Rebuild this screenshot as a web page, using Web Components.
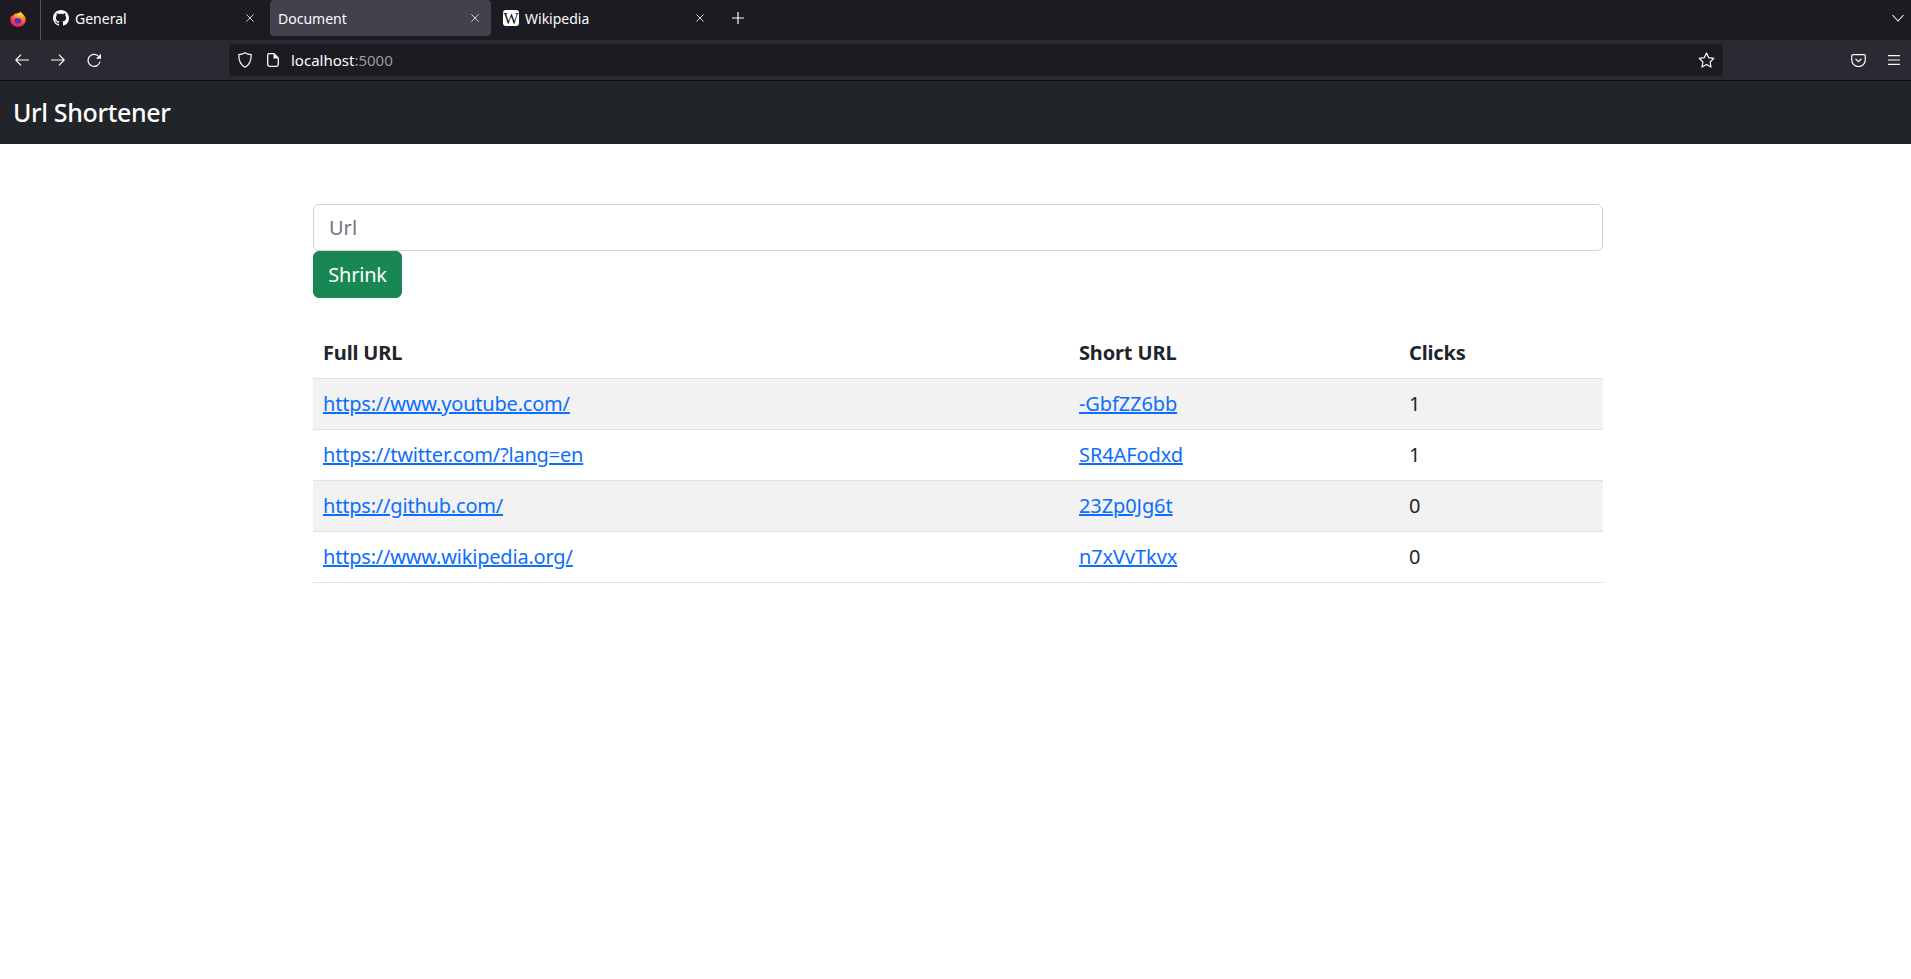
<!DOCTYPE html>
<html lang="en">
<head>
<meta charset="utf-8">
<title>Document</title>
<style>
  html, body { margin: 0; padding: 0; background: #fff; }
  body { font-family: "Noto Sans", "Open Sans", sans-serif; color: #212529; }
</style>
</head>
<body>
<browser-chrome>
  <browser-tab>
    <svg slot="icon" width="16" height="16" viewBox="0 0 16 16"><path fill="#fbfbfe" d="M8 0C3.58 0 0 3.58 0 8c0 3.54 2.29 6.53 5.47 7.59.4.07.55-.17.55-.38 0-.19-.01-.82-.01-1.49-2.01.37-2.53-.49-2.69-.94-.09-.23-.48-.94-.82-1.13-.28-.15-.68-.52-.01-.53.63-.01 1.08.58 1.23.82.72 1.21 1.87.87 2.33.66.07-.52.28-.87.51-1.07-1.78-.2-3.64-.89-3.64-3.95 0-.87.31-1.59.82-2.15-.08-.2-.36-1.02.08-2.12 0 0 .67-.21 2.2.82.64-.18 1.32-.27 2-.27.68 0 1.36.09 2 .27 1.53-1.04 2.2-.82 2.2-.82.44 1.1.16 1.92.08 2.12.51.56.82 1.27.82 2.15 0 3.07-1.87 3.75-3.65 3.95.29.25.54.73.54 1.48 0 1.07-.01 1.93-.01 2.2 0 .21.15.46.55.38A8.013 8.013 0 0016 8c0-4.42-3.58-8-8-8z"/></svg>
    General
  </browser-tab>
  <browser-tab selected>Document</browser-tab>
  <browser-tab>
    <span slot="icon" style="display:block;width:16px;height:16px;background:#fff;border-radius:3px;color:#111;font:400 16px/17px 'Liberation Serif',serif;text-align:center;overflow:hidden;">W</span>
    Wikipedia
  </browser-tab>
</browser-chrome>
<nav-toolbar></nav-toolbar>
<app-navbar>Url Shortener</app-navbar>
<main-content>
  <shrink-form></shrink-form>
  <url-table>
    <url-row full="https://www.youtube.com/" short="-GbfZZ6bb" clicks="1"></url-row>
    <url-row full="https://twitter.com/?lang=en" short="SR4AFodxd" clicks="1"></url-row>
    <url-row full="https://github.com/" short="23Zp0Jg6t" clicks="0"></url-row>
    <url-row full="https://www.wikipedia.org/" short="n7xVvTkvx" clicks="0"></url-row>
  </url-table>
</main-content>

<script>
// tab strip at the very top of the browser window
class BrowserChrome extends HTMLElement {
  constructor() {
    super();
    this.attachShadow({ mode: 'open' });
    this.shadowRoot.innerHTML = `
      <style>
        :host { display: flex; height: 40px; background: #1c1b22; align-items: flex-start; }
        .logo { width: 30px; height: 40px; padding-left: 10px; border-right: 1px solid #52525e; display: flex; align-items: center; margin-right: 4px; }
        .logo svg { margin-top: -2px; }
        .tabs { display: flex; gap: 4px; }
        .plus { width: 36px; height: 36px; margin-left: 4px; display: flex; align-items: center; justify-content: center; }
        .spacer { flex: 1; }
        .more { width: 26px; height: 36px; display: flex; align-items: center; justify-content: center; }
      </style>
      <div class="logo">
        <svg width="16" height="16" viewBox="0 0 16 16">
          <defs>
            <radialGradient id="fx" cx="0.65" cy="0.15" r="0.95">
              <stop offset="0" stop-color="#ffe14a"/>
              <stop offset="0.4" stop-color="#ff8a2a"/>
              <stop offset="0.75" stop-color="#f5304f"/>
              <stop offset="1" stop-color="#d01a80"/>
            </radialGradient>
          </defs>
          <path fill="url(#fx)" d="M10.600.200c.2 1.500 1.500 2 2.500 3.100 1.600 1.600 2.700 3.200 2.700 5.100 0 4.100-3.500 7.400-7.800 7.400S.2 12.500.2 8.400c0-1.400.4-2.900 1.300-4.200l.6 1.500C3 4 4.400 2.800 6 2.600 8 2.300 10 1.800 10.600.200z"/>
          <circle cx="8" cy="9.300" r="3.500" fill="#5b2fc0"/>
          <path fill="#ff9a2e" d="M4 6.400c2-1.600 4.600-1.600 6.400-.2 1.200 1 1.600 2.200 1.400 3.400-.6-1.600-2-2.600-3.800-2.600-1.600 0-3 .2-4-.6z"/>
        </svg>
      </div>
      <div class="tabs"><slot></slot></div>
      <div class="plus">
        <svg width="12" height="12" viewBox="0 0 12 12"><path d="M6 0v12M0 6h12" stroke="#fbfbfe" stroke-width="1.2" fill="none"/></svg>
      </div>
      <div class="spacer"></div>
      <div class="more">
        <svg width="12" height="8" viewBox="0 0 12 8"><path d="M.5 1l5.500 6 5.500-6" stroke="#fbfbfe" stroke-width="1.100" fill="none"/></svg>
      </div>
    `;
  }
}

class BrowserTab extends HTMLElement {
  constructor() {
    super();
    this.attachShadow({ mode: 'open' });
    this.shadowRoot.innerHTML = `
      <style>
        :host { display: flex; align-items: center; width: 221px; height: 36px; box-sizing: border-box; padding: 0 12px 0 8px; border-radius: 4px; color: #fbfbfe; font: 14px/20px "Noto Sans", sans-serif; }
        :host([selected]) { background: #42414d; }
        .icon { display: flex; margin-right: 6px; }
        .label { flex: 1; white-space: nowrap; padding-top: 1px; }
        .close { width: 8px; height: 8px; display: flex; }
        svg { display: block; }
      </style>
      <span class="icon"><slot name="icon"></slot></span>
      <span class="label"><slot></slot></span>
      <span class="close"><svg width="8" height="8" viewBox="0 0 8 8"><path d="M.4.4l7.2 7.2M7.6.4L.4 7.6" stroke="#d4d4da" stroke-width="1" fill="none"/></svg></span>
    `;
    if (!this.querySelector('[slot=icon]')) {
      this.shadowRoot.querySelector('.icon').style.display = 'none';
    }
  }
}

// back, forward, reload, address bar, pocket, menu
class NavToolbar extends HTMLElement {
  constructor() {
    super();
    this.attachShadow({ mode: 'open' });
    this.shadowRoot.innerHTML = `
      <style>
        :host { display: flex; align-items: center; height: 40px; background: #2b2a33; border-bottom: 1px solid #0c0c0d; padding-left: 4px; color: #fbfbfe; font: 15px/20px "Noto Sans", sans-serif; }
        .btn { width: 36px; height: 32px; display: flex; align-items: center; justify-content: center; flex: none; }
        .btn.menu { width: 34px; margin-left: 1px; }
        .urlbar { flex: 1; height: 32px; margin: 0 117px; border-radius: 4px; background: #1c1b22; display: flex; align-items: center; padding: 0 8px; }
        .shield { margin-left: 1px; margin-right: 15px; display: flex; }
        .page { margin-right: 12px; display: flex; }
        .addr { flex: 1; white-space: nowrap; }
        .addr span { color: #9a99a2; }
        .star { display: flex; }
        svg { display: block; }
      </style>
      <div class="btn"><svg width="14" height="12" viewBox="0 0 14 12"><path d="M14 6H1M6 .7L.8 6 6 11.300" stroke="#fbfbfe" stroke-width="1.200" fill="none"/></svg></div>
      <div class="btn"><svg width="14" height="12" viewBox="0 0 14 12"><path d="M0 6h13M8 .7L13.200 6 8 11.300" stroke="#fbfbfe" stroke-width="1.200" fill="none"/></svg></div>
      <div class="btn"><svg width="15" height="15" viewBox="0 0 15 15"><path d="M13 8.500A6 6 0 1 1 11.200 3" stroke="#fbfbfe" stroke-width="1.200" fill="none"/><path d="M14 .8v5h-5z" fill="#fbfbfe"/></svg></div>
      <div class="urlbar">
        <span class="shield"><svg width="14" height="16" viewBox="0 0 14 16"><path d="M7 .8c2 1.200 4 1.800 6.200 1.900.1 5.800-1.500 10-6.200 12.500C2.300 12.700.7 8.500.8 2.700 3 2.600 5 2 7 .8z" stroke="#fbfbfe" stroke-width="1.200" fill="none" stroke-linejoin="round"/></svg></span>
        <span class="page"><svg width="12" height="14" viewBox="0 0 12 14"><path d="M2 .7h5L11.300 5v6.500a1.800 1.800 0 0 1-1.800 1.800H2.500a1.800 1.800 0 0 1-1.800-1.800V2A1.300 1.300 0 0 1 2 .7z" stroke="#fbfbfe" stroke-width="1.300" fill="none"/><path d="M6.500 1v4.500h4.500z" fill="#fbfbfe"/></svg></span>
        <span class="addr">localhost<span>:5000</span></span>
        <span class="star"><svg width="17" height="16" viewBox="0 0 17 16"><path d="M8.500 1l2.200 4.700 5.100.7-3.700 3.600.9 5.100-4.500-2.500-4.500 2.500.9-5.100L1.200 6.400l5.100-.7z" stroke="#fbfbfe" stroke-width="1.200" fill="none" stroke-linejoin="round"/></svg></span>
      </div>
      <div class="btn"><svg width="15" height="13" viewBox="0 0 15 13"><path d="M2 .7h11a1.300 1.300 0 0 1 1.300 1.300v3.800a6.800 6.800 0 0 1-13.600 0V2A1.300 1.300 0 0 1 2 .7z" stroke="#fbfbfe" stroke-width="1.200" fill="none"/><path d="M4.500 4.800l3 2.800 3-2.800" stroke="#fbfbfe" stroke-width="1.200" fill="none"/></svg></div>
      <div class="btn menu"><svg width="12" height="10" viewBox="0 0 12 10"><path d="M0 .7h12M0 5h12M0 9.300h12" stroke="#fbfbfe" stroke-width="1.200" fill="none"/></svg></div>
    `;
  }
}

class AppNavbar extends HTMLElement {
  constructor() {
    super();
    this.attachShadow({ mode: 'open' });
    this.shadowRoot.innerHTML = `
      <style>
        :host { display: flex; align-items: center; height: 63px; background: #212529; color: #fff; padding-left: 13px; font: 500 25px/1.5 "Noto Sans", sans-serif; letter-spacing: -0.36px; }
      </style>
      <slot></slot>
    `;
  }
}

class MainContent extends HTMLElement {
  constructor() {
    super();
    this.attachShadow({ mode: 'open' });
    this.shadowRoot.innerHTML = `
      <style>
        :host { display: block; margin: 0 308px 0 313px; padding-top: 60px; font: 20px/30px "Noto Sans", sans-serif; color: #212529; }
      </style>
      <slot></slot>
    `;
  }
}

class ShrinkForm extends HTMLElement {
  constructor() {
    super();
    this.attachShadow({ mode: 'open' });
    this.shadowRoot.innerHTML = `
      <style>
        :host { display: block; margin-bottom: 30px; }
        input { display: block; width: 100%; height: 47px; box-sizing: border-box; padding: 0 15px; border: 1px solid #ced4da; border-radius: 6px; font: inherit; color: #212529; background: #fff; outline: 0; }
        input::placeholder { color: #6c757d; opacity: 1; }
        button { display: block; width: 89px; height: 47px; padding: 0; border: 1px solid #198754; border-radius: 6px; background: #198754; color: #fff; font: inherit; letter-spacing: -0.2px; }
      </style>
      <input type="text" placeholder="Url">
      <button type="button">Shrink</button>
    `;
  }
}

class UrlTable extends HTMLElement {
  constructor() {
    super();
    this.attachShadow({ mode: 'open' });
    this.shadowRoot.innerHTML = `
      <style>
        :host { display: block; }
        .head { display: grid; grid-template-columns: 756px 330px 1fr; border-bottom: 1px solid #dee2e6; font-weight: 700; letter-spacing: -0.15px; }
        .head div { padding: 10px; }
        ::slotted(url-row:nth-of-type(odd)) { background: #f2f2f2; }
      </style>
      <div class="head"><div>Full URL</div><div>Short URL</div><div>Clicks</div></div>
      <slot></slot>
    `;
  }
}

class UrlRow extends HTMLElement {
  constructor() {
    super();
    this.attachShadow({ mode: 'open' });
    const full = this.getAttribute('full');
    const short = this.getAttribute('short');
    this.shadowRoot.innerHTML = `
      <style>
        :host { display: grid; grid-template-columns: 756px 330px 1fr; border-bottom: 1px solid #dee2e6; }
        div { padding: 10px; }
        a { color: #0d6efd; text-decoration: underline; }
        .full a { letter-spacing: -0.2px; }
        .short a { letter-spacing: -0.1px; }
      </style>
      <div class="full"><a href="${full}">${full}</a></div>
      <div class="short"><a href="#">${short}</a></div>
      <div>${this.getAttribute('clicks')}</div>
    `;
  }
}

customElements.define('browser-chrome', BrowserChrome);
customElements.define('browser-tab', BrowserTab);
customElements.define('nav-toolbar', NavToolbar);
customElements.define('app-navbar', AppNavbar);
customElements.define('main-content', MainContent);
customElements.define('shrink-form', ShrinkForm);
customElements.define('url-table', UrlTable);
customElements.define('url-row', UrlRow);
</script>
</body>
</html>
